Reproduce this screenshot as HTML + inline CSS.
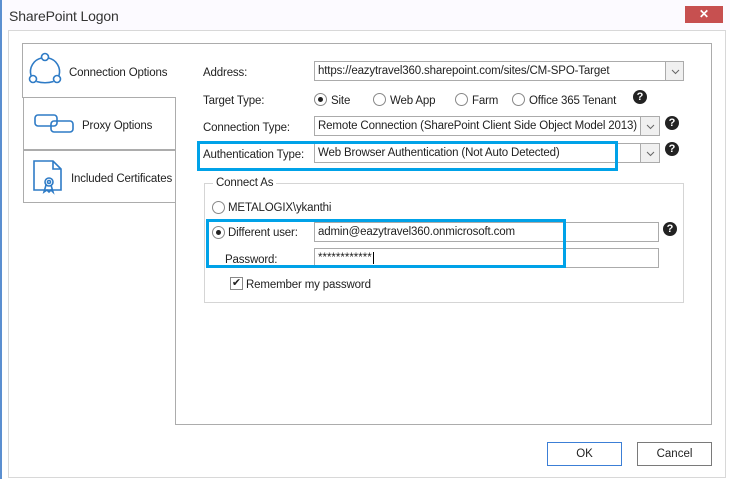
<!DOCTYPE html>
<html><head><style>
*{box-sizing:border-box;margin:0;padding:0}
body{width:730px;height:479px;overflow:hidden;background:#fff;font-family:"Liberation Sans",sans-serif;font-size:11.5px;color:#222;position:relative}
.a{position:absolute}
.lbl{position:absolute;font-size:11.5px;color:#222;white-space:nowrap;letter-spacing:-0.15px;margin-top:2px}
.inp{position:absolute;border:1px solid #ababab;background:#fff;padding:3px 3px 0;font-size:11.5px;letter-spacing:-0.15px;white-space:nowrap;overflow:hidden}
.dd{position:absolute;border:1px solid #ababab;background:#f0f0f0}
.dd svg{position:absolute;left:5px;top:7px}
.rad{position:absolute;width:13px;height:13px;border:1px solid #888;border-radius:50%;background:#fff;margin-top:1px}
.rad.on::after{content:"";position:absolute;left:3px;top:3px;width:5px;height:5px;border-radius:50%;background:#222}
.help{position:absolute;width:14px;height:14px;border-radius:50%;background:#222;color:#fff;font-weight:bold;font-size:11px;text-align:center;line-height:14px}
.btn{position:absolute;border:1px solid #adadad;background:#fff;text-align:center;line-height:23px;font-size:11.5px}
.blue{position:absolute;border:3px solid #00a2e8}
</style></head><body>
<div class="a" style="left:0;top:0;width:730px;height:30px;background:#fcfaff"></div>
<div class="a" style="left:0;top:0;width:2px;height:479px;background:#5b8fd0"></div>
<div class="lbl" style="left:9px;top:6px;font-size:14px;color:#333">SharePoint Logon</div>
<div class="a" style="left:685px;top:6px;width:38px;height:17px;background:#c75050;color:#fff;text-align:center;font-weight:bold;font-size:12px;line-height:17px">✕</div>
<div class="a" style="left:8px;top:30px;width:718px;height:448px;border:1px solid #d8d8d8"></div>
<div class="a" style="left:175px;top:43px;width:537px;height:382px;border:1px solid #acacac"></div>
<div class="a" style="left:22px;top:43px;width:154px;height:55px;border:1px solid #acacac;border-right:none;background:#fff"></div>
<svg class="a" style="left:28px;top:52px" width="36" height="34" viewBox="0 0 36 34"><g fill="none" stroke="#2e7bc6" stroke-width="1.6"><circle cx="17" cy="5" r="3.5"/><circle cx="5" cy="27" r="3.5"/><circle cx="29" cy="27" r="3.5"/><path d="M13.5 6 A14 14 0 0 0 3 23.5"/><path d="M20.5 6 A14 14 0 0 1 31 23.5"/><path d="M8.5 29.5 Q17 32 25.5 29.5"/></g></svg>
<div class="lbl" style="left:69px;top:65px">Connection Options</div>
<div class="a" style="left:23px;top:97px;width:153px;height:53px;border:1px solid #acacac"></div>
<svg class="a" style="left:33px;top:113px" width="42" height="22"><g fill="none" stroke="#2e7bc6" stroke-width="1.6"><rect x="2" y="2" width="22" height="11" rx="3"/><rect x="18" y="8" width="22" height="11" rx="3"/></g></svg>
<div class="lbl" style="left:82px;top:118px">Proxy Options</div>
<div class="a" style="left:23px;top:150px;width:153px;height:53px;border:1px solid #acacac"></div>
<svg class="a" style="left:31px;top:159px" width="34" height="36"><g fill="none" stroke="#2e7bc6" stroke-width="1.6"><path d="M3 2 H22 L30 10 V31 H3 Z"/><path d="M22 2 V10 H30"/><circle cx="18" cy="23" r="4"/><circle cx="18" cy="23" r="1.5"/><path d="M15 26 L13 33 L16 31 L18 33 L20 31 L22 33 L20 26"/></g></svg>
<div class="lbl" style="left:71px;top:171px">Included Certificates</div>
<div class="lbl" style="left:203px;top:65px">Address:</div>
<div class="inp" style="left:314px;top:61px;width:352px;height:20px">https://eazytravel360.sharepoint.com/sites/CM-SPO-Target</div>
<div class="dd" style="left:665px;top:61px;width:19px;height:20px"><svg width="9" height="6"><path d="M1 1 L4.5 4.5 L8 1" stroke="#666" fill="none"/></svg></div>
<div class="lbl" style="left:203px;top:93px">Target Type:</div>
<div class="rad on" style="left:314px;top:92px"></div><div class="lbl" style="left:331px;top:93px">Site</div>
<div class="rad" style="left:373px;top:92px"></div><div class="lbl" style="left:390px;top:93px">Web App</div>
<div class="rad" style="left:455px;top:92px"></div><div class="lbl" style="left:472px;top:93px">Farm</div>
<div class="rad" style="left:512px;top:92px"></div><div class="lbl" style="left:529px;top:93px">Office 365 Tenant</div>
<div class="help" style="left:633px;top:90px">?</div>
<div class="lbl" style="left:203px;top:120px">Connection Type:</div>
<div class="inp" style="left:314px;top:116px;width:327px;height:20px">Remote Connection (SharePoint Client Side Object Model 2013)</div>
<div class="dd" style="left:640px;top:116px;width:20px;height:20px"><svg width="9" height="6"><path d="M1 1 L4.5 4.5 L8 1" stroke="#666" fill="none"/></svg></div>
<div class="help" style="left:665px;top:116px">?</div>
<div class="inp" style="left:314px;top:143px;width:327px;height:20px">Web Browser Authentication (Not Auto Detected)</div>
<div class="dd" style="left:640px;top:143px;width:20px;height:20px"><svg width="9" height="6"><path d="M1 1 L4.5 4.5 L8 1" stroke="#666" fill="none"/></svg></div>
<div class="help" style="left:665px;top:142px">?</div>
<div class="blue" style="left:197px;top:141px;width:421px;height:30px"></div>
<div class="lbl" style="left:203px;top:147px">Authentication Type:</div>
<div class="a" style="left:204px;top:183px;width:480px;height:120px;border:1px solid #d5d5d5"></div>
<div class="lbl" style="left:213px;top:175px;background:#fff;padding:0 3px">Connect As</div>
<div class="rad" style="left:212px;top:200px"></div><div class="lbl" style="left:228px;top:200px">METALOGIX\ykanthi</div>
<div class="inp" style="left:314px;top:222px;width:345px;height:20px">admin@eazytravel360.onmicrosoft.com</div>
<div class="help" style="left:663px;top:222px">?</div>
<div class="inp" style="left:314px;top:248px;width:345px;height:20px;letter-spacing:0">************<span style="border-left:1px solid #000;margin-left:1px"></span></div>
<div class="blue" style="left:206px;top:219px;width:360px;height:49px"></div>
<div class="rad on" style="left:212px;top:225px"></div><div class="lbl" style="left:228px;top:225px">Different user:</div>
<div class="lbl" style="left:225px;top:252px">Password:</div>
<div class="a" style="left:230px;top:277px;width:13px;height:13px;border:1px solid #888;font-size:11px;line-height:11px;text-align:center">✔</div>
<div class="lbl" style="left:246px;top:277px">Remember my password</div>
<div class="btn" style="left:547px;top:442px;width:75px;height:24px;border-color:#3c7fd6">OK</div>
<div class="btn" style="left:637px;top:442px;width:75px;height:24px;border-color:#7a7a7a">Cancel</div>
</body></html>
